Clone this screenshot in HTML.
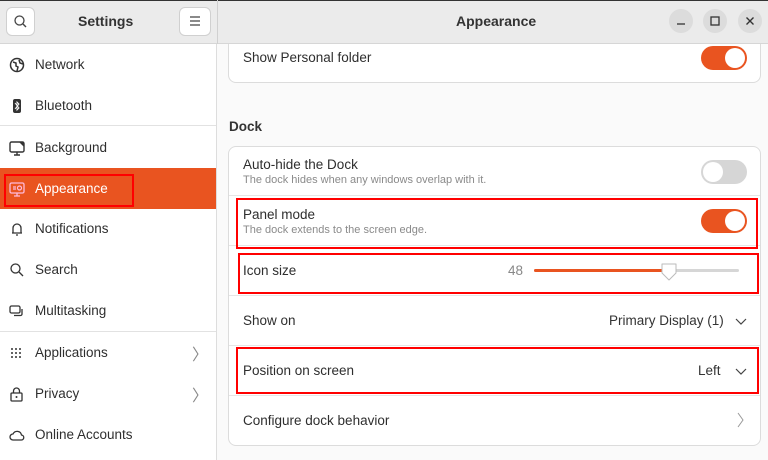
<!DOCTYPE html>
<html><head><meta charset="utf-8"><style>
*{box-sizing:border-box;margin:0;padding:0}
body{width:768px;height:460px;overflow:hidden;font-family:"Liberation Sans",sans-serif;font-size:13.5px;color:#333;background:#fafafa;position:relative}
.abs{position:absolute}
.hdr{top:0;height:44px;background:#ebebeb;border-bottom:1px solid #d6d6d6;border-top:1px solid #333;z-index:5}
.top{z-index:6}
.side{left:0;top:44px;width:217px;height:416px;background:#fff;border-right:1px solid #ddd}
.item{position:absolute;left:0;width:216px;height:41px;display:flex;align-items:center;padding-left:35px;font-size:13.5px;color:#2e2e2e}
.item svg{position:absolute;left:9px;top:13px}
.sep{position:absolute;left:0;width:216px;height:1px;background:#e2e2e2}
.card{position:absolute;left:228px;width:533px;background:#fff;border:1px solid #dcdcdc;border-radius:8px}
.row{position:absolute;left:0;width:531px;border-bottom:1px solid #e6e6e6}
.t{position:absolute;left:14px;font-size:13.5px;color:#2e2e2e}
.s{position:absolute;left:14px;font-size:11px;color:#8a8a8a}
.tog{position:absolute;width:46px;height:24px;border-radius:12px;background:#e95420}
.tog::after{content:"";position:absolute;top:2px;right:2px;width:20px;height:20px;border-radius:50%;background:#fff}
.tog.off{background:#d6d6d6}.tog.off::after{right:auto;left:2px}
.red{position:absolute;border:2px solid #f00}
.wb{position:absolute;top:9px;width:24px;height:24px;border-radius:50%;background:#dcdcdc;z-index:6}
</style></head><body>
<div class="card" style="top:20px;height:63px">
<div class="t" style="top:29px">Show Personal folder</div>
<div class="tog" style="left:472px;top:25px"></div>
</div>
<div class="abs" style="left:229px;top:119px;font-weight:bold;font-size:13.5px;color:#333">Dock</div>
<div class="card" style="top:146px;height:300px">
<div class="row" style="top:0;height:49px"><div class="t" style="top:10px">Auto-hide the Dock</div><div class="s" style="top:27px">The dock hides when any windows overlap with it.</div><div class="tog off" style="left:472px;top:13px"></div></div>
<div class="row" style="top:49px;height:50px"><div class="t" style="top:11px">Panel mode</div><div class="s" style="top:28px">The dock extends to the screen edge.</div><div class="tog" style="left:472px;top:13px"></div></div>
<div class="row" style="top:99px;height:50px"><div class="t" style="top:17px">Icon size</div><div style="position:absolute;left:279px;top:17px;color:#888">48</div>
<div style="position:absolute;left:305px;top:23px;width:205px;height:3px;background:#d6d6d6;border-radius:2px"></div>
<div style="position:absolute;left:305px;top:23px;width:135px;height:3px;background:#e95420;border-radius:2px"></div>
<svg style="position:absolute;left:430px;top:15px" width="20" height="22"><path d="M3 3h14v9l-7 7-7-7z" fill="#fff" stroke="#bbb" stroke-width="1" stroke-linejoin="round"/></svg></div>
<div class="row" style="top:149px;height:50px"><div class="t" style="top:17px">Show on</div><div style="position:absolute;left:380px;top:17px">Primary Display (1)</div><svg style="position:absolute;left:506px;top:22px" width="12" height="8"><path d="M1 1l5 5 5-5" fill="none" stroke="#444" stroke-width="1.2"/></svg></div>
<div class="row" style="top:199px;height:50px"><div class="t" style="top:17px">Position on screen</div><div style="position:absolute;left:469px;top:17px">Left</div><svg style="position:absolute;left:506px;top:22px" width="12" height="8"><path d="M1 1l5 5 5-5" fill="none" stroke="#444" stroke-width="1.2"/></svg></div>
<div class="row" style="top:249px;height:49px;border:none"><div class="t" style="top:17px">Configure dock behavior</div><svg style="position:absolute;left:508px;top:16px" width="8" height="16"><path d="M1 1l5 7-5 7" fill="none" stroke="#999" stroke-width="1"/></svg></div>
</div>
<div class="red" style="left:236px;top:198px;width:522px;height:51px"></div>
<div class="red" style="left:238px;top:253px;width:521px;height:41px"></div>
<div class="red" style="left:236px;top:347px;width:523px;height:47px"></div>

<div class="abs hdr" style="left:0;width:768px"></div>
<div class="abs top" style="left:217px;top:0;width:1px;height:44px;background:#d0d0d0"></div>
<div class="abs top" style="left:6px;top:7px;width:29px;height:29px;background:#fff;border:1px solid #d0d0d0;border-radius:6px"></div>
<svg class="abs top" style="left:13px;top:14px" width="15" height="15"><circle cx="6.5" cy="6.5" r="4.5" fill="none" stroke="#444" stroke-width="1.3"/><line x1="10" y1="10" x2="13" y2="13" stroke="#444" stroke-width="1.4"/></svg>
<div class="abs top" style="left:78px;top:13px;font-weight:bold;font-size:14px;color:#333">Settings</div>
<div class="abs top" style="left:179px;top:7px;width:32px;height:29px;background:#fff;border:1px solid #d0d0d0;border-radius:6px"></div>
<svg class="abs top" style="left:189px;top:16px" width="12" height="10"><path d="M1 1h10M1 5h10M1 9h10" stroke="#444" stroke-width="1.2"/></svg>
<div class="abs top" style="left:456px;top:13px;font-weight:bold;font-size:14px;color:#333">Appearance</div>
<div class="wb" style="left:669px"></div><div class="wb" style="left:703px"></div><div class="wb" style="left:738px"></div>
<svg class="abs top" style="left:669px;top:9px;z-index:7" width="24" height="24"><path d="M8 15h8" stroke="#333" stroke-width="1.3"/></svg>
<svg class="abs top" style="left:703px;top:9px;z-index:7" width="24" height="24"><rect x="8" y="8" width="8" height="8" fill="none" stroke="#333" stroke-width="1.3"/></svg>
<svg class="abs top" style="left:738px;top:9px;z-index:7" width="24" height="24"><path d="M8.5 8.5l7 7M15.5 8.5l-7 7" stroke="#333" stroke-width="1.4"/></svg>

<div class="abs side">
<div class="item" style="top:0">Network<svg width="16" height="16"><circle cx="8" cy="8" r="6.5" fill="none" stroke="#333" stroke-width="1.5"/><path d="M4 5l3 1 0 3 2 1-1 4M10 3l1 3 3 1" fill="none" stroke="#333" stroke-width="1.5"/></svg></div>
<div class="item" style="top:41px">Bluetooth<svg width="16" height="16"><rect x="4" y="1" width="8" height="14" rx="2" fill="#333"/><path d="M6 5l4 5-2 2V4l2 2-4 5" fill="none" stroke="#fff" stroke-width=".9"/></svg></div>
<div class="sep" style="top:81px"></div>
<div class="item" style="top:83px">Background<svg width="16" height="16"><rect x="1" y="2" width="14" height="10" rx="1.5" fill="none" stroke="#333" stroke-width="1.4"/><path d="M8 12v3M5 15h6" stroke="#333" stroke-width="1.4"/><path d="M10 2h5v5z" fill="#333"/></svg></div>
<div class="item" style="top:124px;background:#e95420;color:#fff">Appearance<svg width="16" height="16"><rect x="1" y="2" width="14" height="10" rx="1.5" fill="none" stroke="#fbd" stroke-width="1.3"/><path d="M8 12v3M5 15h6M4 6h3M4 8h3" stroke="#fbd" stroke-width="1.3"/><circle cx="10.5" cy="7" r="2" fill="none" stroke="#fbd" stroke-width="1.2"/></svg></div>
<div class="item" style="top:164px">Notifications<svg width="16" height="16"><path d="M4 12V7a4 4 0 018 0v5zM3 12h10M7 14h2" fill="none" stroke="#333" stroke-width="1.3"/></svg></div>
<div class="item" style="top:205px">Search<svg width="16" height="16"><circle cx="6.5" cy="6.5" r="4.5" fill="none" stroke="#333" stroke-width="1.3"/><line x1="10" y1="10" x2="14" y2="14" stroke="#333" stroke-width="1.3"/></svg></div>
<div class="item" style="top:246px">Multitasking<svg width="16" height="16"><rect x="1" y="3" width="10" height="7" rx="1.5" fill="none" stroke="#333" stroke-width="1.3"/><path d="M13 6v5a1.5 1.5 0 01-1.5 1.5H5" fill="none" stroke="#333" stroke-width="1.3"/></svg></div>
<div class="sep" style="top:287px"></div>
<div class="item" style="top:288px">Applications<svg width="16" height="16"><g fill="#333"><circle cx="3" cy="4" r="1"/><circle cx="7" cy="4" r="1"/><circle cx="11" cy="4" r="1"/><circle cx="3" cy="8" r="1"/><circle cx="7" cy="8" r="1"/><circle cx="11" cy="8" r="1"/><circle cx="3" cy="12" r="1"/><circle cx="7" cy="12" r="1"/><circle cx="11" cy="12" r="1"/></g></svg><span style="position:absolute;left:192px;color:#888;font-size:16px">〉</span></div>
<div class="item" style="top:329px">Privacy<svg width="16" height="16"><rect x="2" y="7" width="11" height="8" rx="1" fill="none" stroke="#333" stroke-width="1.3"/><path d="M4.5 7V5a3 3 0 016 0v2" fill="none" stroke="#333" stroke-width="1.3"/><circle cx="7.5" cy="11" r="1" fill="#333"/></svg><span style="position:absolute;left:192px;color:#888;font-size:16px">〉</span></div>
<div class="item" style="top:370px">Online Accounts<svg width="16" height="16"><path d="M4 13a3 3 0 010-6 4.5 4.5 0 018.5 1A2.5 2.5 0 0112 13z" fill="none" stroke="#333" stroke-width="1.3"/></svg></div>
</div>
<div class="red" style="left:4px;top:174px;width:130px;height:33px"></div>
</body></html>
